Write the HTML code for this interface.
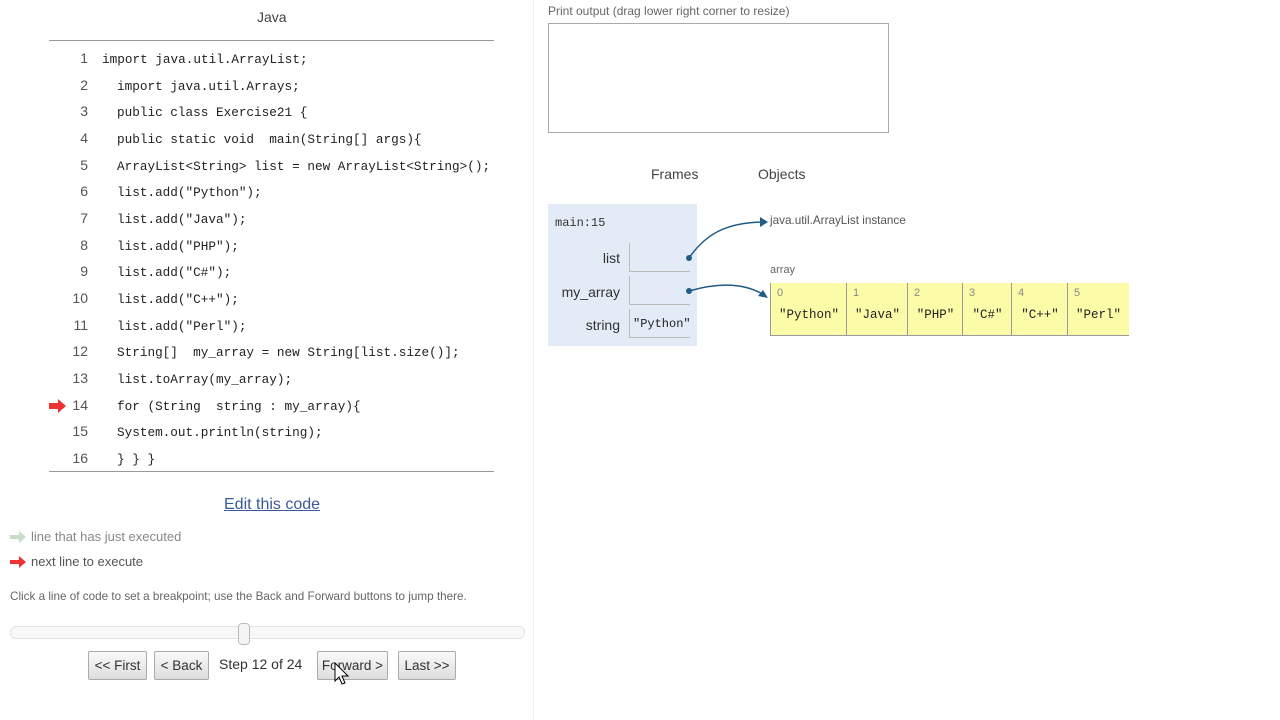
<!DOCTYPE html>
<html><head><style>
body{margin:0;width:1280px;height:720px;background:#fff;font-family:"Liberation Sans",sans-serif;position:relative;overflow:hidden;color:#333}
.a{position:absolute;white-space:pre}
.code{font-family:"Liberation Mono",monospace;font-size:12.7px;color:#222;margin-top:2px}
.ln{font-family:"Liberation Sans",sans-serif;font-size:14px;color:#555;text-align:right;width:40px}
.btn{position:absolute;top:651px;height:27px;border:1px solid #aaa;border-radius:2px;background:linear-gradient(#fafafa,#ddd);font-size:13.5px;line-height:27px;text-align:center;color:#333}
.cell{position:absolute;top:283px;height:52px;background:#fcfca8;border-left:1px solid #999;border-bottom:1px solid #999}
.cell .i{position:absolute;left:6px;top:4px;font-size:11px;color:#888}
.cell .v{position:absolute;left:0;right:0;top:25px;text-align:center;font-family:"Liberation Mono",monospace;font-size:12.5px;color:#222}
</style></head><body>
<div class="a" style="left:257px;top:9px;font-size:14px;color:#444">Java</div>
<div class="a" style="left:49px;top:40px;width:445px;height:1px;background:#999"></div>
<div class="a" style="left:49px;top:471px;width:445px;height:1px;background:#999"></div>
<div class="a" style="left:533px;top:0;width:1px;height:720px;background:#eee"></div>

<div class="a ln" style="left:48px;top:50px">1</div><div class="a code" style="left:102px;top:50px">import java.util.ArrayList;</div>
<div class="a ln" style="left:48px;top:77px">2</div><div class="a code" style="left:117px;top:77px">import java.util.Arrays;</div>
<div class="a ln" style="left:48px;top:103px">3</div><div class="a code" style="left:117px;top:103px">public class Exercise21 {</div>
<div class="a ln" style="left:48px;top:130px">4</div><div class="a code" style="left:117px;top:130px">public static void  main(String[] args){</div>
<div class="a ln" style="left:48px;top:157px">5</div><div class="a code" style="left:117px;top:157px">ArrayList&lt;String&gt; list = new ArrayList&lt;String&gt;();</div>
<div class="a ln" style="left:48px;top:183px">6</div><div class="a code" style="left:117px;top:183px">list.add("Python");</div>
<div class="a ln" style="left:48px;top:210px">7</div><div class="a code" style="left:117px;top:210px">list.add("Java");</div>
<div class="a ln" style="left:48px;top:237px">8</div><div class="a code" style="left:117px;top:237px">list.add("PHP");</div>
<div class="a ln" style="left:48px;top:263px">9</div><div class="a code" style="left:117px;top:263px">list.add("C#");</div>
<div class="a ln" style="left:48px;top:290px">10</div><div class="a code" style="left:117px;top:290px">list.add("C++");</div>
<div class="a ln" style="left:48px;top:317px">11</div><div class="a code" style="left:117px;top:317px">list.add("Perl");</div>
<div class="a ln" style="left:48px;top:343px">12</div><div class="a code" style="left:117px;top:343px">String[]  my_array = new String[list.size()];</div>
<div class="a ln" style="left:48px;top:370px">13</div><div class="a code" style="left:117px;top:370px">list.toArray(my_array);</div>
<div class="a ln" style="left:48px;top:397px">14</div><div class="a code" style="left:117px;top:397px">for (String  string : my_array){</div>
<div class="a ln" style="left:48px;top:423px">15</div><div class="a code" style="left:117px;top:423px">System.out.println(string);</div>
<div class="a ln" style="left:48px;top:450px">16</div><div class="a code" style="left:117px;top:450px">} } }</div>
<svg class="a" style="left:48px;top:399px" width="20" height="14"><path d="M1 4h9V0l8 7-8 7v-4H1z" fill="#e33"/></svg>

<div class="a" style="left:224px;top:496px;font-size:16px;color:#3a5a9a;text-decoration:underline">Edit this code</div>
<svg class="a" style="left:10px;top:531px" width="18" height="12"><path d="M0 4h9V0l7 6-7 6V8H0z" fill="#c8dcc8"/></svg>
<div class="a" style="left:31px;top:529px;font-size:13px;color:#888">line that has just executed</div>
<svg class="a" style="left:10px;top:556px" width="18" height="12"><path d="M0 4h9V0l7 6-7 6V8H0z" fill="#e33"/></svg>
<div class="a" style="left:31px;top:554px;font-size:13px;color:#555">next line to execute</div>
<div class="a" style="left:10px;top:590px;font-size:11.7px;color:#666">Click a line of code to set a breakpoint; use the Back and Forward buttons to jump there.</div>
<div class="a" style="left:10px;top:626px;width:513px;height:11px;border:1px solid #e4e4e4;border-radius:6px;background:#f8f8f8"></div>
<div class="a" style="left:238px;top:623px;width:10px;height:20px;border:1px solid #bbb;border-radius:4px;background:#f4f4f4"></div>
<div class="btn" style="left:88px;width:57px">&lt;&lt; First</div>
<div class="btn" style="left:154px;width:53px">&lt; Back</div>
<div class="a" style="left:219px;top:656px;font-size:14px;color:#333">Step 12 of 24</div>
<div class="btn" style="left:317px;width:69px">Forward &gt;</div>
<div class="btn" style="left:398px;width:56px">Last &gt;&gt;</div>
<svg class="a" style="left:334px;top:662px" width="16" height="26"><path d="M1 1v18l4-4 3 7 3-1-3-7h6z" fill="#fff" stroke="#000"/></svg>

<div class="a" style="left:548px;top:4px;font-size:12px;color:#666">Print output (drag lower right corner to resize)</div>
<div class="a" style="left:548px;top:23px;width:339px;height:108px;border:1px solid #aaa"></div>
<div class="a" style="left:651px;top:166px;font-size:14px;color:#444">Frames</div>
<div class="a" style="left:758px;top:166px;font-size:14px;color:#444">Objects</div>
<div class="a" style="left:548px;top:204px;width:149px;height:142px;background:#e2ebf6"></div>
<div class="a" style="left:555px;top:216px;font-family:'Liberation Mono',monospace;font-size:12px;color:#333">main:15</div>
<div class="a" style="left:560px;top:250px;width:60px;text-align:right;font-size:14px;color:#333">list</div>
<div class="a" style="left:540px;top:284px;width:80px;text-align:right;font-size:14px;color:#333">my_array</div>
<div class="a" style="left:560px;top:317px;width:60px;text-align:right;font-size:14px;color:#333">string</div>
<div class="a" style="left:629px;top:243px;width:60px;height:28px;border-left:1px solid #bbb;border-bottom:1px solid #bbb"></div>
<div class="a" style="left:629px;top:276px;width:60px;height:28px;border-left:1px solid #bbb;border-bottom:1px solid #bbb"></div>
<div class="a" style="left:629px;top:309px;width:60px;height:28px;border-left:1px solid #bbb;border-bottom:1px solid #bbb"></div>
<div class="a" style="left:633px;top:317px;font-family:'Liberation Mono',monospace;font-size:12px;color:#222">"Python"</div>
<svg class="a" style="left:680px;top:210px" width="100" height="95">
<path d="M9 48C25 25 45 12 86 12" stroke="#1f5c86" stroke-width="1.5" fill="none"/>
<path d="M80 7l8 5-8 5z" fill="#1f5c86"/>
<path d="M9 81C30 75 60 70 84 85" stroke="#1f5c86" stroke-width="1.5" fill="none"/>
<path d="M78 86l10 2-5-8z" fill="#1f5c86"/>
<circle cx="9" cy="48" r="3" fill="#1f5c86"/><circle cx="9" cy="81" r="3" fill="#1f5c86"/>
</svg>
<div class="a" style="left:770px;top:214px;font-size:11.7px;color:#555">java.util.ArrayList instance</div>
<div class="a" style="left:770px;top:264px;font-size:11px;color:#666">array</div>
<div class="cell" style="left:770px;width:76px"><div class="i">0</div><div class="v">"Python"</div></div>
<div class="cell" style="left:846px;width:61px"><div class="i">1</div><div class="v">"Java"</div></div>
<div class="cell" style="left:907px;width:55px"><div class="i">2</div><div class="v">"PHP"</div></div>
<div class="cell" style="left:962px;width:49px"><div class="i">3</div><div class="v">"C#"</div></div>
<div class="cell" style="left:1011px;width:56px"><div class="i">4</div><div class="v">"C++"</div></div>
<div class="cell" style="left:1067px;width:61px"><div class="i">5</div><div class="v">"Perl"</div></div>
</body></html>
